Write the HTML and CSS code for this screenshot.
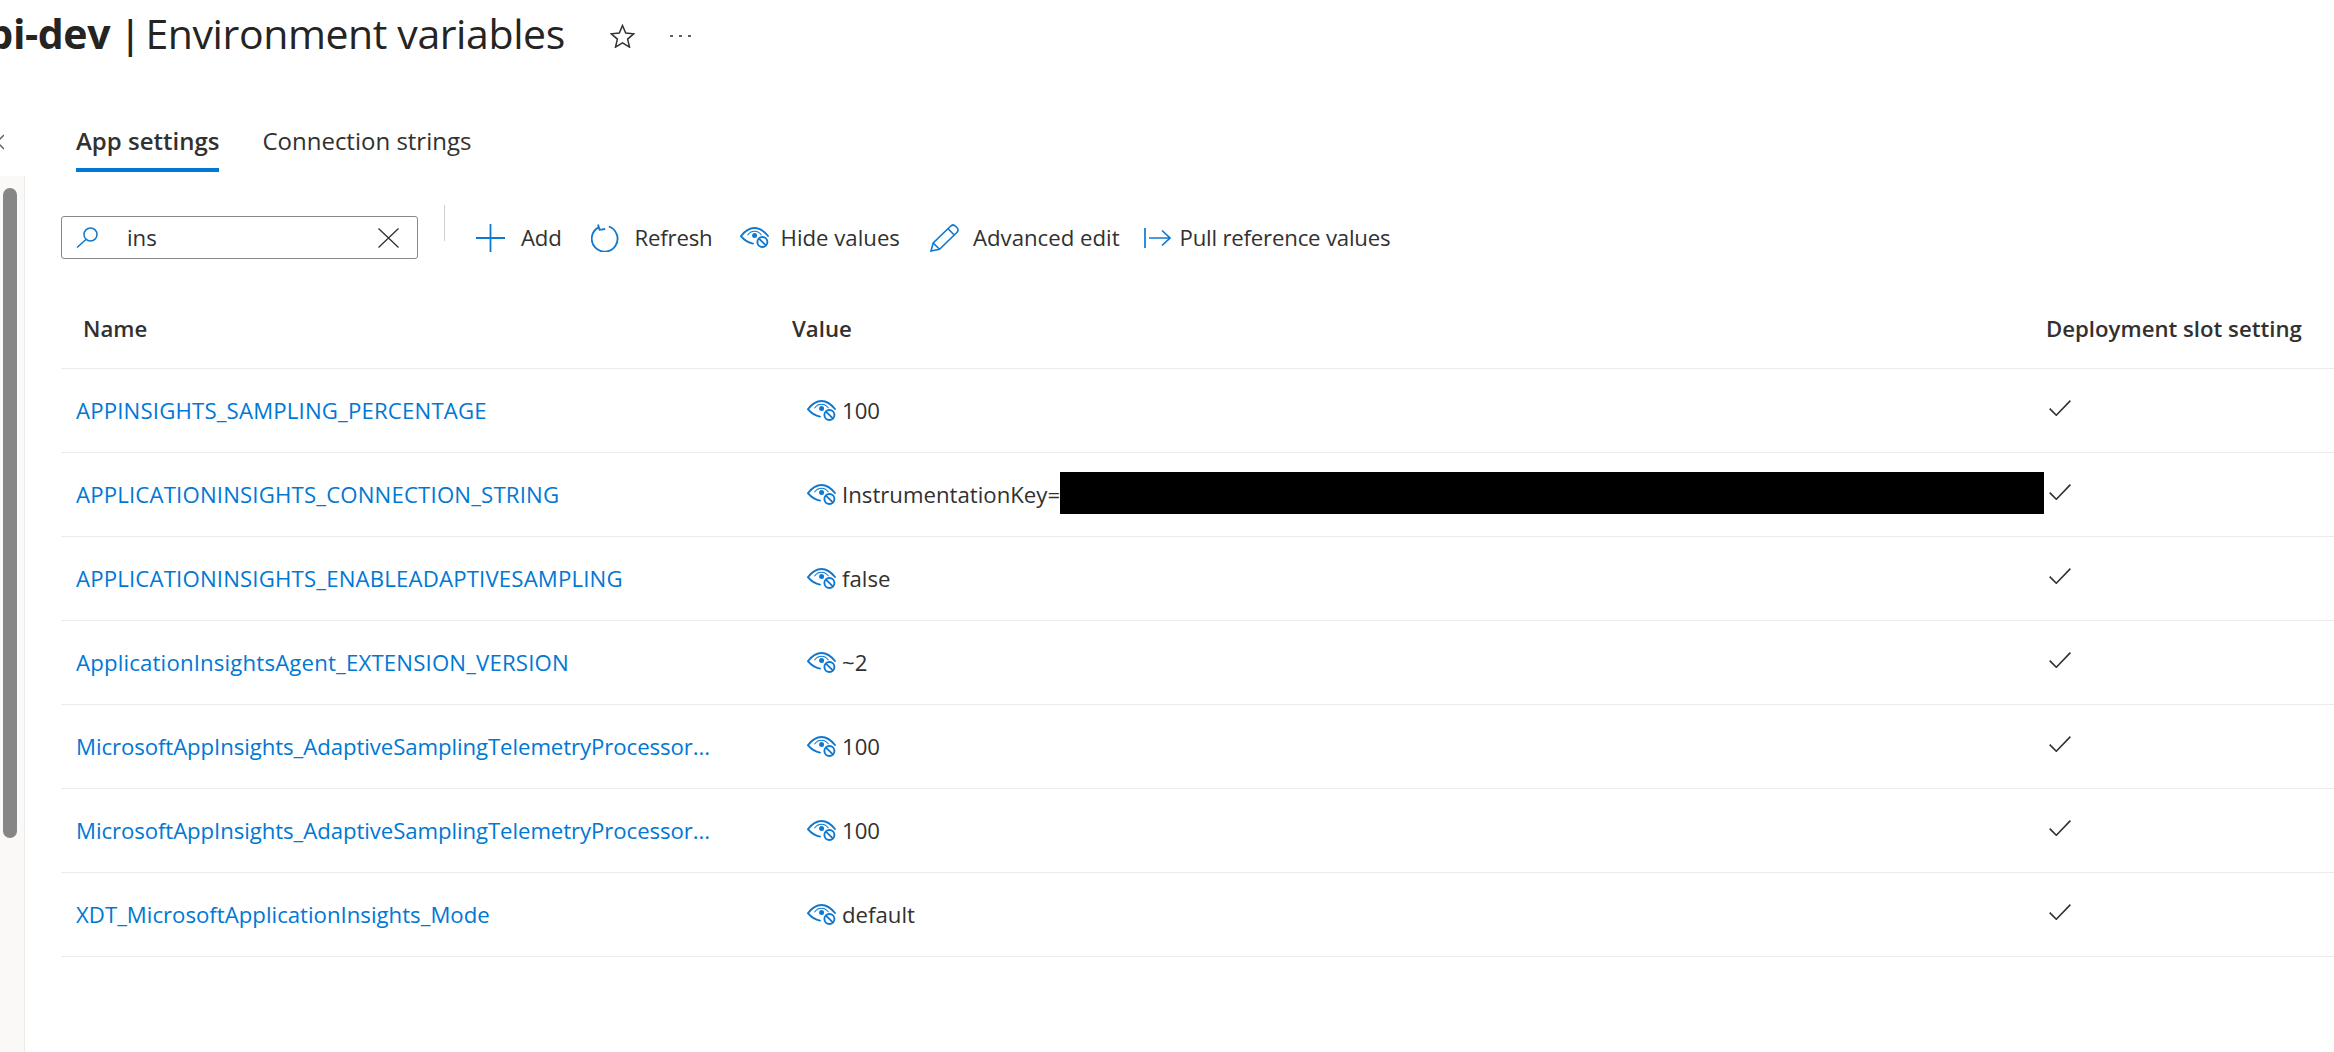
FILE: index.html
```html
<!DOCTYPE html>
<html lang="en">
<head>
<meta charset="utf-8">
<title>Environment variables</title>
<link rel="stylesheet" href="styles.css">
</head>
<body>
<svg class="defs" width="0" height="0" aria-hidden="true">
  <symbol id="eye" viewBox="0 0 29 21">
    <path d="M.9 9.200C5 3.800 9.500 1 14.500 1c4.700 0 9.200 2.700 13.500 8M.9 9.200C4.300 13.300 8.200 15.800 13 16.600" fill="none" stroke="#0f78d0" stroke-width="1.900" stroke-linecap="round"/>
    <path d="M7.500 8.200C9.200 5.600 11.500 4.200 14.500 4.200s5.300 1.400 7 4" fill="none" stroke="#0f78d0" stroke-width="1.100"/>
    <circle cx="14.600" cy="8.400" r="2.500" fill="#0f78d0"/>
    <circle cx="22.400" cy="15" r="5" fill="#fff" stroke="#0f78d0" stroke-width="1.900"/>
    <path d="M19 11.600l6.800 6.800" stroke="#0f78d0" stroke-width="1.800"/>
  </symbol>
  <symbol id="check" viewBox="0 0 22 16">
    <path d="M.7 8.600l6.600 6.600L21.400.6" fill="none" stroke="#323130" stroke-width="1.600"/>
  </symbol>
</svg>

<header class="title-row">
  <h1 class="title"><b>api-dev</b> <span class="pipe">|</span> Environment variables</h1>
  <svg class="star" viewBox="0 0 25 24"><path d="M12.500 1.500l3.200 7.600 8 .7-6.100 5.300 1.900 8-7-4.300-7 4.300 1.900-8L1.300 9.800l8-.7z" fill="none" stroke="#323130" stroke-width="1.500"/></svg>
  <span class="more"><i></i><i></i><i></i></span>
</header>

<nav class="tabs">
  <svg class="collapse" viewBox="0 0 4 16"><path d="M4 1l-7 7 7 7" fill="none" stroke="#605e5c" stroke-width="1.400"/></svg>
  <a class="tab active">App settings</a>
  <a class="tab">Connection strings</a>
</nav>

<div class="workspace">
  <aside class="rail"><div class="thumb"></div></aside>
  <main class="content">
    <div class="toolbar">
      <div class="search">
        <svg class="search-icon" viewBox="0 0 23 21"><circle cx="14.500" cy="7.500" r="6.500" fill="none" stroke="#0f78d0" stroke-width="1.500"/><path d="M10 12.500L1 20.500" stroke="#0f78d0" stroke-width="1.500"/></svg>
        <span class="search-text">ins</span>
        <svg class="clear" viewBox="0 0 21 20"><path d="M.5.5l20 19M20.500.5l-20 19" stroke="#323130" stroke-width="1.300"/></svg>
      </div>
      <span class="sep"></span>
      <button class="cmd cmd-add"><svg class="ico-add" viewBox="0 0 29 28"><path d="M0 14h29M14.500 0v28" stroke="#0f78d0" stroke-width="1.800"/></svg>Add</button>
      <button class="cmd cmd-refresh"><svg class="ico-refresh" viewBox="0 0 28 28"><path d="M17.800 2.500A12.900 12.900 0 1 1 8 3.100" fill="none" stroke="#0f78d0" stroke-width="1.800"/><path d="M7 .5l1.600 5.300 5.600-.8" fill="none" stroke="#0f78d0" stroke-width="1.800"/></svg>Refresh</button>
      <button class="cmd cmd-hide"><svg class="ico-eye"><use href="#eye"/></svg>Hide values</button>
      <button class="cmd cmd-edit"><svg class="ico-edit" viewBox="0 0 29 28"><path d="M1 27l2.200-8L20.500 2.200c1.500-1.500 3.500-1.500 5 0l1.300 1.300c1.500 1.500 1.500 3.500 0 5L9.500 25.300zM3.200 19l6.300 6.300M18 4.700l6.300 6.300" fill="none" stroke="#0f78d0" stroke-width="1.600"/></svg>Advanced edit</button>
      <button class="cmd cmd-pull"><svg class="ico-pull" viewBox="0 0 27 20"><path d="M1 0v20M5 10h21M18 2.500l8 7.500-8 7.500" fill="none" stroke="#0f78d0" stroke-width="1.700"/></svg>Pull reference values</button>
    </div>

    <div class="grid">
      <div class="row head">
        <div class="cell name-head">Name</div>
        <div class="cell value-head">Value</div>
        <div class="cell slot-head">Deployment slot setting</div>
      </div>
      <div class="row">
        <div class="cell name caps"><a>APPINSIGHTS_SAMPLING_PERCENTAGE</a></div>
        <div class="cell value"><svg class="ico-eye"><use href="#eye"/></svg>100</div>
        <div class="cell slot"><svg class="ico-check"><use href="#check"/></svg></div>
      </div>
      <div class="row">
        <div class="cell name caps"><a>APPLICATIONINSIGHTS_CONNECTION_STRING</a></div>
        <div class="cell value"><svg class="ico-eye"><use href="#eye"/></svg>InstrumentationKey=<span class="redact"></span></div>
        <div class="cell slot"><svg class="ico-check"><use href="#check"/></svg></div>
      </div>
      <div class="row">
        <div class="cell name caps"><a>APPLICATIONINSIGHTS_ENABLEADAPTIVESAMPLING</a></div>
        <div class="cell value"><svg class="ico-eye"><use href="#eye"/></svg>false</div>
        <div class="cell slot"><svg class="ico-check"><use href="#check"/></svg></div>
      </div>
      <div class="row">
        <div class="cell name caps"><a>ApplicationInsightsAgent_EXTENSION_VERSION</a></div>
        <div class="cell value"><svg class="ico-eye"><use href="#eye"/></svg>~2</div>
        <div class="cell slot"><svg class="ico-check"><use href="#check"/></svg></div>
      </div>
      <div class="row">
        <div class="cell name long"><a>MicrosoftAppInsights_AdaptiveSamplingTelemetryProcessor...</a></div>
        <div class="cell value"><svg class="ico-eye"><use href="#eye"/></svg>100</div>
        <div class="cell slot"><svg class="ico-check"><use href="#check"/></svg></div>
      </div>
      <div class="row">
        <div class="cell name long"><a>MicrosoftAppInsights_AdaptiveSamplingTelemetryProcessor...</a></div>
        <div class="cell value"><svg class="ico-eye"><use href="#eye"/></svg>100</div>
        <div class="cell slot"><svg class="ico-check"><use href="#check"/></svg></div>
      </div>
      <div class="row">
        <div class="cell name"><a>XDT_MicrosoftApplicationInsights_Mode</a></div>
        <div class="cell value"><svg class="ico-eye"><use href="#eye"/></svg>default</div>
        <div class="cell slot"><svg class="ico-check"><use href="#check"/></svg></div>
      </div>
    </div>
  </main>
</div>
</body>
</html>
```
FILE: styles.css
```css
* { box-sizing: border-box; }
html, body { margin: 0; height: 100%; }
body {
  width: 2334px;
  height: 1052px;
  overflow: hidden;
  background: #fff;
  color: #323130;
  font-family: "Open Sans", "Noto Sans", sans-serif;
  font-size: 22.2px;
  display: flex;
  flex-direction: column;
}
.defs { display: block; height: 0; }

/* title */
.title-row { height: 72px; flex: none; display: flex; align-items: center; overflow: hidden; }
.title { margin: -6px 0 0 -37px; font-size: 41px; font-weight: 400; color: #252423; white-space: nowrap; letter-spacing: -.4px; }
.title b { font-weight: 700; }
.pipe { font-family: "Liberation Sans", sans-serif; margin-left: 4.5px; }
.star { width: 25px; height: 24px; margin-left: 45px; }
.more { display: flex; gap: 6px; margin-left: 35px; }
.more i { width: 3px; height: 2px; background: #605e5c; }

/* tabs */
.tabs { height: 48px; margin-top: 52px; flex: none; display: flex; align-items: flex-start; gap: 43px; padding-left: 76px; position: relative; }
.tab { font-size: 24px; line-height: 34px; color: #323130; }
.tab.active { font-weight: 600; height: 48px; border-bottom: 4px solid #0078d4; }
.collapse { position: absolute; left: 0; top: 10px; width: 4px; height: 16px; }

/* workspace */
.workspace { flex: 1; display: flex; min-height: 0; margin-top: 4px; }
.rail { width: 25px; flex: none; background: #faf9f8; border-right: 1px solid #edebe9; padding: 12px 0 0 3px; }
.thumb { width: 14px; height: 650px; background: #868686; border-radius: 7px; }
.content { flex: 1; min-width: 0; padding: 40px 0 0 36px; }

/* toolbar */
.toolbar { display: flex; align-items: center; height: 43px; }
.search { width: 357px; height: 43px; border: 1px solid #8a8886; border-radius: 3px; display: flex; align-items: center; padding-left: 14px; padding-right: 18px; }
.search-icon { width: 23px; height: 21px; }
.search-text { margin-left: 28px; flex: 1; }
.clear { width: 21px; height: 20px; }
.sep { width: 1px; height: 36px; background: #d2d0ce; align-self: flex-start; margin: -11px 0 0 26px; }
.cmd { display: flex; align-items: center; padding: 0; border: 0; background: none; font: inherit; color: inherit; white-space: nowrap; letter-spacing: -.2px; }
.cmd svg { flex: none; }
.cmd-add { margin-left: 31px; gap: 16px; }
.ico-add, .ico-edit { width: 29px; height: 28px; }
.cmd-refresh { margin-left: 29px; gap: 16px; }
.ico-refresh { width: 28px; height: 28px; }
.cmd-hide { margin-left: 27px; gap: 12px; letter-spacing: 0; }
.ico-eye { width: 29px; height: 21px; flex: none; }
.cmd-edit { margin-left: 30px; gap: 14px; letter-spacing: 0; }
.cmd-pull { margin-left: 24px; gap: 9px; }
.ico-pull { width: 27px; height: 20px; }

/* grid */
.grid { margin-top: 40px; }
.row { display: grid; grid-template-columns: 731px 1253px 1fr; height: 84px; border-bottom: 1px solid #edebe9; align-items: center; }
.row.head { height: 70px; padding-bottom: 10px; font-weight: 600; }
.cell { min-width: 0; }
.name-head { padding-left: 22px; }
.slot-head { padding-left: 1px; white-space: nowrap; }
.name { padding-left: 15px; color: #0078d4; white-space: nowrap; }
.name.caps { letter-spacing: .17px; }
.name.long { letter-spacing: -.08px; }
.value { padding-left: 15px; display: flex; align-items: center; gap: 6px; white-space: nowrap; }
.slot { padding-left: 4px; display: flex; }
.ico-check { width: 22px; height: 16px; margin-top: -6px; }
.redact { width: 984px; height: 42px; background: #000; flex: none; margin: 0 0 4px -6px; }
```
